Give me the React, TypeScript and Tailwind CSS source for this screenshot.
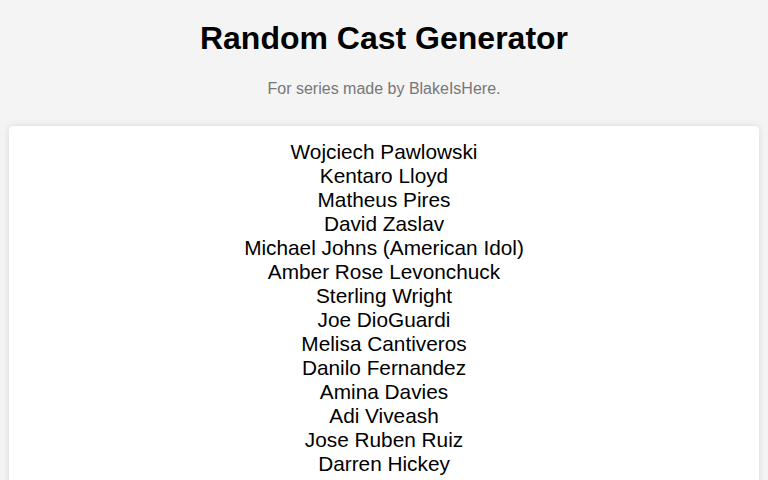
const cast = [
  'Wojciech Pawlowski',
  'Kentaro Lloyd',
  'Matheus Pires',
  'David Zaslav',
  'Michael Johns (American Idol)',
  'Amber Rose Levonchuck',
  'Sterling Wright',
  'Joe DioGuardi',
  'Melisa Cantiveros',
  'Danilo Fernandez',
  'Amina Davies',
  'Adi Viveash',
  'Jose Ruben Ruiz',
  'Darren Hickey',
  'Tanya Roberts',
  'Lucas Moreau',
];

export default function App() {
  return (
    <div className="min-h-screen bg-[#f4f4f4] px-[9px] pt-[20px] pb-6 text-center font-['Liberation_Sans',Arial,sans-serif]">
      <h1 className="text-[32px] font-bold leading-[37px] text-black">Random Cast Generator</h1>
      <p className="mt-[23px] text-base leading-[18px] text-[#777]">For series made by BlakeIsHere.</p>

      <div className="mt-[28px] rounded bg-white pt-[14px] pb-4 shadow-[0_0_6px_rgba(0,0,0,0.12)]">
        <ul>
          {cast.map((name) => (
            <li key={name} className="text-[20.8px] leading-6 text-black">
              {name}
            </li>
          ))}
        </ul>
      </div>
    </div>
  );
}
